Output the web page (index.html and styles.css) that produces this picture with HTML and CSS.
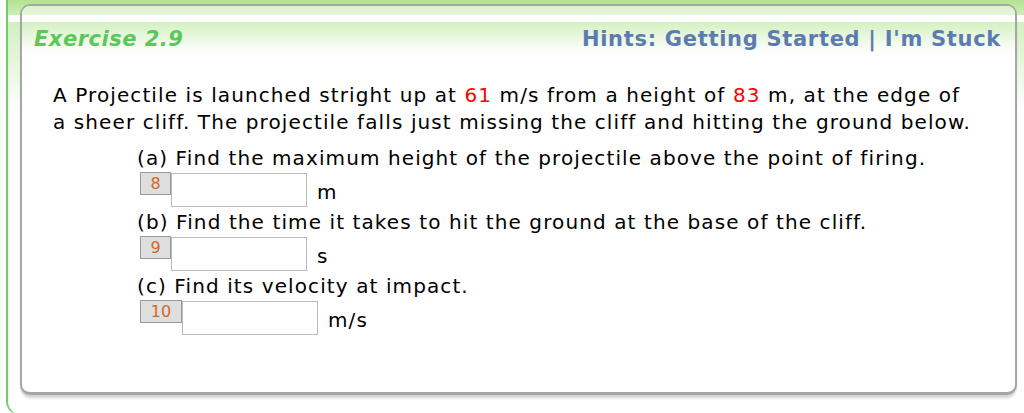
FILE: index.html
```html
<!DOCTYPE html>
<html>
<head>
<meta charset="utf-8">
<link rel="stylesheet" href="styles.css">
</head>
<body>
<div class="outer">
  <div class="panel">
    <div class="header">
      <div class="title">Exercise 2.9</div>
      <div class="hints">Hints: Getting Started | I'm Stuck</div>
    </div>
    <div class="content">
      <p class="problem">A Projectile is launched stright up at <span class="num">61</span> m/s from a height of <span class="num">83</span> m, at the edge of<br>a sheer cliff. The projectile falls just missing the cliff and hitting the ground below.</p>
      <div class="parts">
        <div class="q">(a) Find the maximum height of the projectile above the point of firing.</div>
        <div class="ans"><span class="badge">8</span><span class="box"></span><span class="unit">m</span></div>
        <div class="q">(b) Find the time it takes to hit the ground at the base of the cliff.</div>
        <div class="ans"><span class="badge">9</span><span class="box"></span><span class="unit">s</span></div>
        <div class="q">(c) Find its velocity at impact.</div>
        <div class="ans"><span class="badge wide">10</span><span class="box"></span><span class="unit">m/s</span></div>
      </div>
    </div>
  </div>
</div>
</body>
</html>
```
FILE: styles.css
```css
html, body {
  margin: 0;
  padding: 0;
  background: #fff;
}
body {
  width: 1024px;
  height: 413px;
  overflow: hidden;
  font-family: "DejaVu Sans", Verdana, sans-serif;
}
.outer {
  margin-left: 6px;
  width: 1014px;
  height: 410px;
  border-left: 2px solid #6fd06a;
  border-right: 2px solid #9ee29a;
  border-bottom: 1px solid #bfeab8;
  border-bottom-left-radius: 14px;
  border-bottom-right-radius: 14px;
  background: linear-gradient(to bottom, #b3e391 0, #cdeeb7 15px, #fff 15px, #fff 22px, #d2f0bf 22px, #fff 110px);
  padding-top: 4px;
  padding-left: 12px;
  box-sizing: content-box;
}
.panel {
  width: 993px;
  height: 386px;
  border: 2px solid #a6a6a6;
  border-bottom-width: 3px;
  border-radius: 10px;
  background: #fff;
  box-shadow: 0 4px 3px -1px rgba(0,0,0,0.18);
  overflow: hidden;
}
.header {
  display: flex;
  justify-content: space-between;
  align-items: flex-end;
  height: 47px;
  padding: 0 14px 0 12px;
  background: linear-gradient(to bottom, #dcf3cc 0, #e4f6d8 9px, #fff 9px, #fff 16px, #d4f0c1 16px, #fff 47px);
}
.title {
  font-weight: bold;
  font-style: italic;
  font-size: 21px;
  letter-spacing: 0.5px;
  color: #5ac85a;
  line-height: 1;
  padding-bottom: 3px;
}
.hints {
  font-weight: bold;
  font-size: 21px;
  letter-spacing: 0.7px;
  color: #5d7bb1;
  line-height: 1;
  padding-bottom: 3px;
}
.content {
  padding: 29px 12px 0 31px;
  font-size: 20px;
  letter-spacing: 1.1px;
  color: #000;
}
.problem {
  margin: 0;
  line-height: 27px;
  white-space: nowrap;
}
.num {
  color: #f00;
}
.parts {
  margin-left: 84px;
  margin-top: 9px;
}
.q {
  line-height: 27px;
}
.ans {
  display: flex;
  align-items: flex-start;
  height: 37px;
}
.badge {
  box-sizing: border-box;
  width: 31px;
  height: 23px;
  margin-left: 3px;
  background: #dedede;
  border: 1px solid #999;
  color: #d2691e;
  font-family: "DejaVu Sans", Verdana, sans-serif;
  font-size: 16px;
  letter-spacing: 0;
  line-height: 21px;
  text-align: center;
}
.badge.wide {
  width: 42px;
}
.box {
  box-sizing: border-box;
  width: 136px;
  height: 34px;
  margin-top: 1px;
  border: 1px solid #bbb;
  background: #fff;
}
.unit {
  margin-left: 10px;
  margin-top: 7px;
  line-height: 26px;
}
```
